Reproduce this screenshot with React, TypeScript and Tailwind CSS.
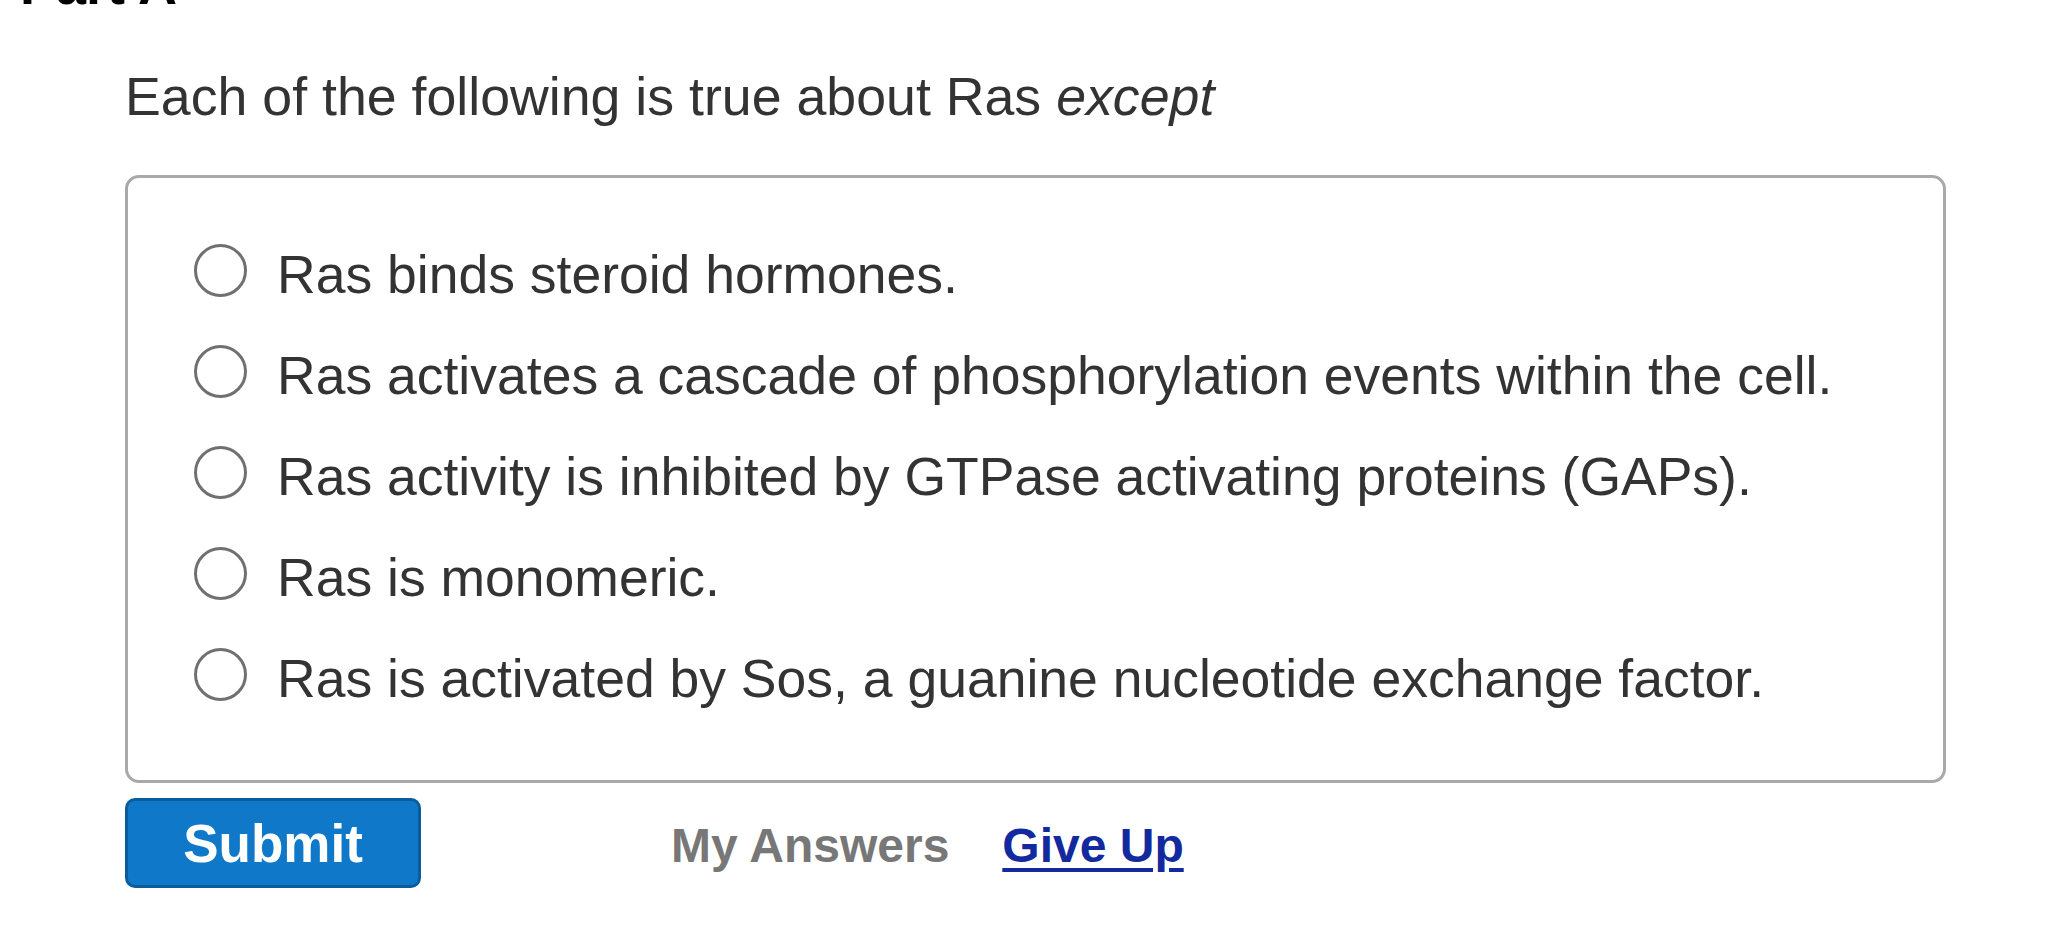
import { useState } from 'react';

const OPTIONS = [
  'Ras binds steroid hormones.',
  'Ras activates a cascade of phosphorylation events within the cell.',
  'Ras activity is inhibited by GTPase activating proteins (GAPs).',
  'Ras is monomeric.',
  'Ras is activated by Sos, a guanine nucleotide exchange factor.',
];

export default function App() {
  const [picked, setPicked] = useState<number | null>(null);

  return (
    <div className="min-h-screen overflow-hidden bg-white text-[#333] font-['Liberation_Sans',Arial,sans-serif]">
      <h2 className="mt-[-46px] pl-[20px] text-[54px] font-bold leading-[62px] text-black">Part A</h2>

      <div className="pl-[125px] w-[1946px]">
        <p className="mt-[49px] text-[53.7px] leading-[62px]">
          Each of the following is true about Ras <em>except</em>
        </p>

        <div className="mt-[48px] rounded-[14px] border-[3px] border-[#a9a9a9] pl-[66px] pt-[46px] pb-[51px]">
          {OPTIONS.map((opt, i) => (
            <label key={i} className="flex h-[101px] cursor-pointer items-center gap-[30px]">
              <span
                onClick={() => setPicked(i)}
                className="mb-[8px] flex h-[53px] w-[53px] shrink-0 items-center justify-center rounded-full border-[3px] border-[#707070] bg-white"
              >
                {picked === i && <span className="h-[25px] w-[25px] rounded-full bg-[#333]" />}
              </span>
              <span className="text-[53.5px] leading-[62px]" onClick={() => setPicked(i)}>
                {opt}
              </span>
            </label>
          ))}
        </div>

        <div className="mt-[15px] flex items-center">
          <button className="h-[90px] w-[296px] rounded-[10px] border-[3px] border-[#0b5c9c] bg-[#0f78c9] text-[53px] font-bold leading-none text-white">
            Submit
          </button>
          <span className="ml-[250px] mt-[6px] text-[48px] font-bold text-[#777]">My Answers</span>
          <a href="#" className="ml-[53px] mt-[6px] text-[48px] font-bold text-[#13299e] underline underline-offset-[6px]">
            Give Up
          </a>
        </div>
      </div>
    </div>
  );
}
